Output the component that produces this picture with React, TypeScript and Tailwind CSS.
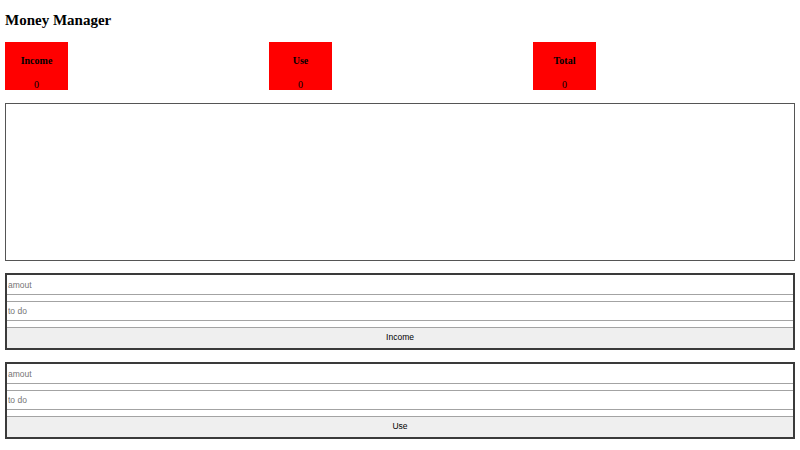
import React from "react";

function Card({ label }: { label: string }) {
  return (
    <div className="flex">
      <div className="flex h-[48px] w-[63px] flex-col items-center bg-[#ff0000] pt-[13px] text-[10px] font-bold leading-[11.5px] text-black">
        <span>{label}</span>
        <span className="mt-[13px] font-normal">0</span>
      </div>
    </div>
  );
}

function EntryForm({ action }: { action: string }) {
  return (
    <form className="flex flex-col border-2 border-[#3a3a3a] bg-white font-['Liberation_Sans',Arial,sans-serif] text-[8.5px]">
      <input
        type="text"
        placeholder="amout"
        className="h-[20px] border-b border-[#a3a3a3] px-[1px] pt-[1px] outline-none placeholder:text-[#757575]"
      />
      <input
        type="text"
        placeholder="to do"
        className="mt-[6px] h-[20px] border-y border-[#a3a3a3] px-[1px] outline-none placeholder:text-[#757575]"
      />
      <button
        type="button"
        className="mt-[6px] h-[21px] border-t border-[#a3a3a3] bg-[#efefef] text-black"
      >
        {action}
      </button>
    </form>
  );
}

export default function App() {
  return (
    <div className="min-h-[450px] bg-white px-[5px] pt-[12px] font-['Liberation_Serif','Times_New_Roman',serif] text-black">
      <h2 className="text-[15px] font-bold leading-[17.5px]">Money Manager</h2>
      <div className="mt-[12px] grid grid-cols-[264px_264px_264px]">
        <Card label="Income" />
        <Card label="Use" />
        <Card label="Total" />
      </div>
      <div className="mt-[13px] h-[158px] w-[790px] border border-[#555]" />
      <div className="mt-[12px] flex w-[790px] flex-col gap-[12px]">
        <EntryForm action="Income" />
        <EntryForm action="Use" />
      </div>
    </div>
  );
}
